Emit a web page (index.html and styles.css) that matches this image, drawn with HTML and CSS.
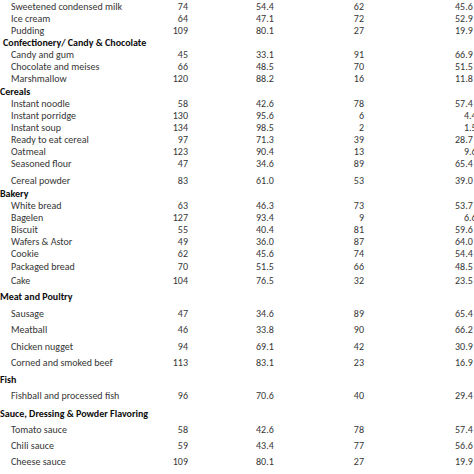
FILE: index.html
```html
<!DOCTYPE html>
<html>
<head>
<meta charset="utf-8">
<link rel="stylesheet" href="styles.css">
</head>
<body>
<div class="table">
  <div class="row h12"><span class="lab item">Sweetened condensed milk</span><span class="c1">74</span><span class="c2">54.4</span><span class="c3">62</span><span class="c4">45.6</span></div>
  <div class="row h12"><span class="lab item">Ice cream</span><span class="c1">64</span><span class="c2">47.1</span><span class="c3">72</span><span class="c4">52.9</span></div>
  <div class="row h12"><span class="lab item">Pudding</span><span class="c1">109</span><span class="c2">80.1</span><span class="c3">27</span><span class="c4">19.9</span></div>
  <div class="row h12"><span class="lab cat cat-in">Confectionery/ Candy &amp; Chocolate</span></div>
  <div class="row h12"><span class="lab item">Candy and gum</span><span class="c1">45</span><span class="c2">33.1</span><span class="c3">91</span><span class="c4">66.9</span></div>
  <div class="row h12"><span class="lab item">Chocolate and meises</span><span class="c1">66</span><span class="c2">48.5</span><span class="c3">70</span><span class="c4">51.5</span></div>
  <div class="row h13"><span class="lab item">Marshmallow</span><span class="c1">120</span><span class="c2">88.2</span><span class="c3">16</span><span class="c4">11.8</span></div>
  <div class="row h12"><span class="lab cat">Cereals</span></div>
  <div class="row h12"><span class="lab item">Instant noodle</span><span class="c1">58</span><span class="c2">42.6</span><span class="c3">78</span><span class="c4">57.4</span></div>
  <div class="row h12"><span class="lab item">Instant porridge</span><span class="c1">130</span><span class="c2">95.6</span><span class="c3">6</span><span class="c4 short">4.4</span></div>
  <div class="row h12"><span class="lab item">Instant soup</span><span class="c1">134</span><span class="c2">98.5</span><span class="c3">2</span><span class="c4 short">1.5</span></div>
  <div class="row h12"><span class="lab item">Ready to eat cereal</span><span class="c1">97</span><span class="c2">71.3</span><span class="c3">39</span><span class="c4">28.7</span></div>
  <div class="row h12"><span class="lab item">Oatmeal</span><span class="c1">123</span><span class="c2">90.4</span><span class="c3">13</span><span class="c4 short">9.6</span></div>
  <div class="row h17"><span class="lab item">Seasoned flour</span><span class="c1">47</span><span class="c2">34.6</span><span class="c3">89</span><span class="c4">65.4</span></div>
  <div class="row h13"><span class="lab item">Cereal powder</span><span class="c1">83</span><span class="c2">61.0</span><span class="c3">53</span><span class="c4">39.0</span></div>
  <div class="row h12"><span class="lab cat">Bakery</span></div>
  <div class="row h12"><span class="lab item">White bread</span><span class="c1">63</span><span class="c2">46.3</span><span class="c3">73</span><span class="c4">53.7</span></div>
  <div class="row h12"><span class="lab item">Bagelen</span><span class="c1">127</span><span class="c2">93.4</span><span class="c3">9</span><span class="c4 short">6.6</span></div>
  <div class="row h12"><span class="lab item">Biscuit</span><span class="c1">55</span><span class="c2">40.4</span><span class="c3">81</span><span class="c4">59.6</span></div>
  <div class="row h12"><span class="lab item">Wafers &amp; Astor</span><span class="c1">49</span><span class="c2">36.0</span><span class="c3">87</span><span class="c4">64.0</span></div>
  <div class="row h13"><span class="lab item">Cookie</span><span class="c1">62</span><span class="c2">45.6</span><span class="c3">74</span><span class="c4">54.4</span></div>
  <div class="row h14"><span class="lab item">Packaged bread</span><span class="c1">70</span><span class="c2">51.5</span><span class="c3">66</span><span class="c4">48.5</span></div>
  <div class="row h16"><span class="lab item">Cake</span><span class="c1">104</span><span class="c2">76.5</span><span class="c3">32</span><span class="c4">23.5</span></div>
  <div class="row h17"><span class="lab cat">Meat and Poultry</span></div>
  <div class="row h16"><span class="lab item">Sausage</span><span class="c1">47</span><span class="c2">34.6</span><span class="c3">89</span><span class="c4">65.4</span></div>
  <div class="row h17"><span class="lab item">Meatball</span><span class="c1">46</span><span class="c2">33.8</span><span class="c3">90</span><span class="c4">66.2</span></div>
  <div class="row h16"><span class="lab item">Chicken nugget</span><span class="c1">94</span><span class="c2">69.1</span><span class="c3">42</span><span class="c4">30.9</span></div>
  <div class="row h17"><span class="lab item">Corned and smoked beef</span><span class="c1">113</span><span class="c2">83.1</span><span class="c3">23</span><span class="c4">16.9</span></div>
  <div class="row h16"><span class="lab cat">Fish</span></div>
  <div class="row h18"><span class="lab item">Fishball and processed fish</span><span class="c1">96</span><span class="c2">70.6</span><span class="c3">40</span><span class="c4">29.4</span></div>
  <div class="row h16"><span class="lab cat">Sauce, Dressing &amp; Powder Flavoring</span></div>
  <div class="row h16"><span class="lab item">Tomato sauce</span><span class="c1">58</span><span class="c2">42.6</span><span class="c3">78</span><span class="c4">57.4</span></div>
  <div class="row h16"><span class="lab item">Chili sauce</span><span class="c1">59</span><span class="c2">43.4</span><span class="c3">77</span><span class="c4">56.6</span></div>
  <div class="row h12"><span class="lab item">Cheese sauce</span><span class="c1">109</span><span class="c2">80.1</span><span class="c3">27</span><span class="c4">19.9</span></div>
</div>
</body>
</html>
```

FILE: styles.css
```css
html, body {
  margin: 0;
  padding: 0;
  background: #ffffff;
  overflow: hidden;
}
body {
  width: 474px;
  height: 474px;
  font-family: Carlito, Lato, "Liberation Sans", sans-serif;
  font-size: 10px;
  color: #363636;
}
.table {
  width: 480px;
  padding-top: 1px;
}
.row {
  display: grid;
  grid-template-columns: 150px 38px 132px 44px 116px;
  line-height: 12px;
  white-space: nowrap;
  align-items: start;
}
.h12 { height: 12px; }
.h13 { height: 13px; }
.h14 { height: 14px; }
.h16 { height: 16px; }
.h17 { height: 17px; }
.h18 { height: 18px; }
.lab {
  grid-column: 1;
}
.item {
  padding-left: 11px;
}
.cat {
  font-weight: 700;
  color: #0d0d0d;
  padding-left: 0;
}
.cat-in {
  padding-left: 3px;
}
.c1 {
  grid-column: 2;
  text-align: right;
}
.c2 {
  grid-column: 3;
  padding-left: 68px;
  text-align: left;
}
.c3 {
  grid-column: 4;
  text-align: right;
}
.c4 {
  grid-column: 5;
  padding-left: 91px;
  text-align: left;
}
.c4.short {
  padding-left: 100px;
}
```
